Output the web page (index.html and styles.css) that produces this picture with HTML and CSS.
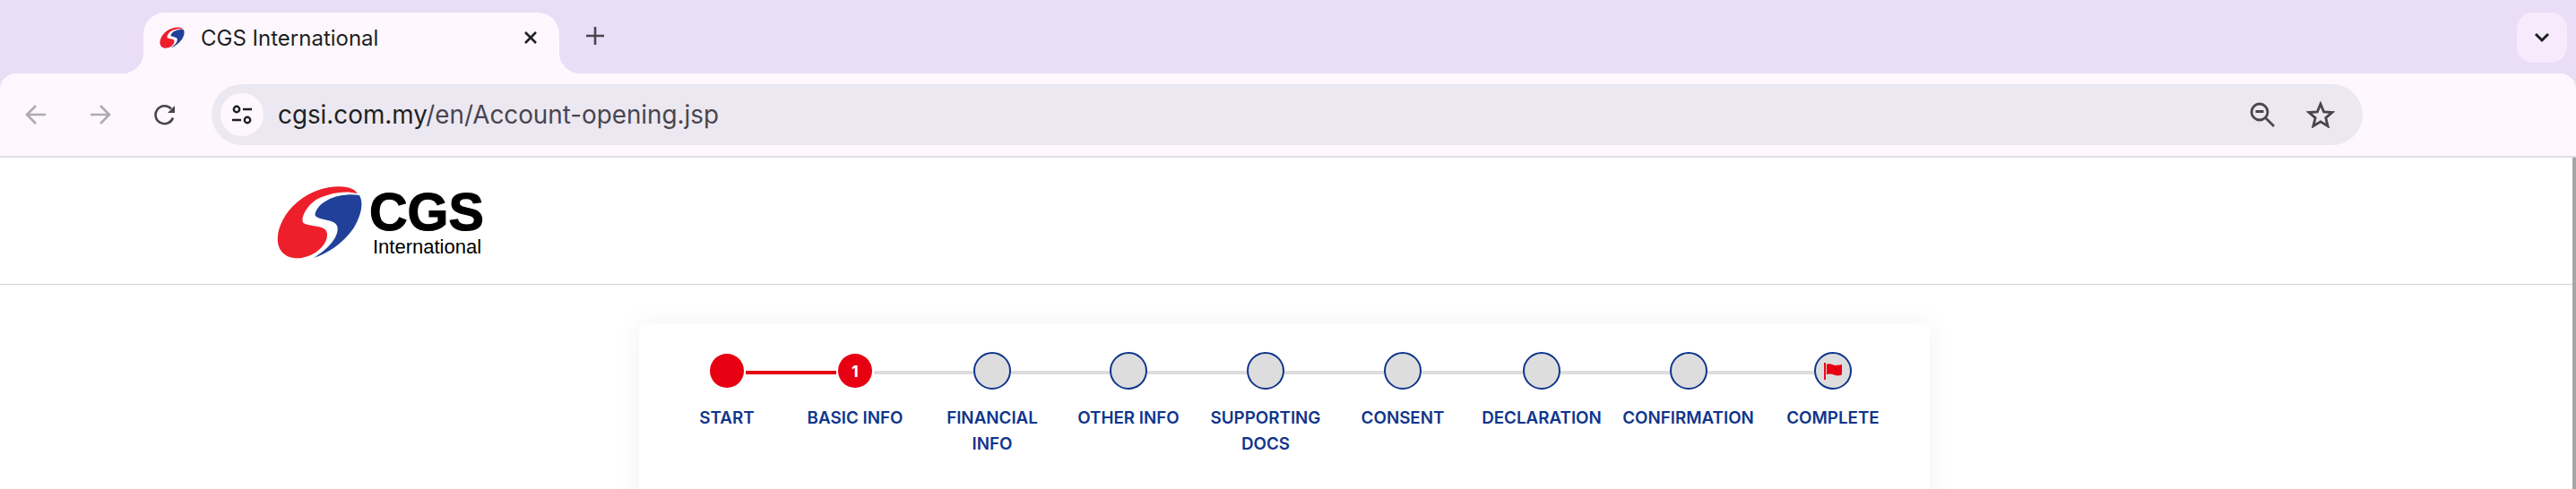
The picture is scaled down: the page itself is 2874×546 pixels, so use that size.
FILE: index.html
```html
<!DOCTYPE html>
<html lang="en">
<head>
    <meta charset="UTF-8">
    <meta name="viewport" content="width=device-width, initial-scale=1.0">
    <title>CGS International</title>
    <link rel="stylesheet" href="styles.css">
</head>
<body>

<svg class="defs" width="0" height="0">
    <symbol id="cgs-mark" viewBox="80 72 290 252">
        <path fill="#ee1f2b" d="M320 82C240 66 125 115 90 220C70 290 110 325 165 318C215 310 255 270 250 235C245 205 190 215 170 200C160 180 190 130 230 115C270 97 320 92 352 103C345 92 335 86 320 82Z"/>
        <path fill="#21409a" d="M358 108C372 130 368 170 338 220C303 270 250 305 205 318C250 290 290 250 285 215C280 185 220 195 210 175C212 145 250 118 290 110C315 105 340 104 358 108Z"/>
    </symbol>
</svg>

<div class="tab-strip">
    <div class="tab">
        <svg class="favicon"><use href="#cgs-mark"/></svg>
        <span class="tab-title">CGS International</span>
        <svg class="tab-close" viewBox="0 0 16 16"><path d="M2 2l12 12M14 2L2 14"/></svg>
    </div>
    <svg class="new-tab" viewBox="0 0 22 22"><path d="M11 1v20M1 11h20"/></svg>
    <div class="tab-menu">
        <svg viewBox="0 0 18 12"><path d="M2 2l7 7 7-7"/></svg>
    </div>
</div>

<div class="toolbar">
    <svg class="nav-icon disabled" viewBox="0 0 24 24"><path d="M23 12H2M12 2L2 12l10 10"/></svg>
    <svg class="nav-icon disabled" viewBox="0 0 24 24"><path d="M1 12h21M12 2l10 10-10 10"/></svg>
    <svg class="nav-icon reload" viewBox="0 0 24 24">
        <path d="M21 15.500A10 10 0 1 1 19 5.500"/>
        <path class="solid" d="M23 2v8h-8z"/>
    </svg>
    <div class="omnibox">
        <div class="site-chip">
            <svg viewBox="0 0 24 24">
                <circle cx="6" cy="6" r="3.2"/>
                <path d="M13 6h10M1 18h10"/>
                <circle cx="18" cy="18" r="3.2"/>
            </svg>
        </div>
        <div class="url"><span class="host">cgsi.com.my</span>/en/Account-opening.jsp</div>
        <svg class="omni-icon" viewBox="0 0 28 28">
            <circle cx="11" cy="11" r="9"/>
            <path d="M17.500 17.500L27 27M6.500 10.500h9"/>
        </svg>
        <svg class="omni-icon star" viewBox="0 0 32 30">
            <path d="M16 3l3.600 8.800 9.400.7-7.200 6.100 2.300 9.200L16 22.800l-8.100 5 2.300-9.200L3 12.500l9.400-.7z"/>
        </svg>
    </div>
</div>

<div class="page">
    <div class="content">
        <header class="site-header">
            <svg class="logo-mark"><use href="#cgs-mark"/></svg>
            <div class="logo-text">
                <div class="logo-name">CGS</div>
                <div class="logo-sub">International</div>
            </div>
        </header>

        <main class="card">
            <div class="stepper">
                <div class="step">
                    <div class="step-head"><span class="line none"></span><span class="dot done"></span><span class="line red"></span></div>
                    <div class="step-label">START</div>
                </div>
                <div class="step">
                    <div class="step-head"><span class="line red"></span><span class="dot done">1</span><span class="line"></span></div>
                    <div class="step-label">BASIC INFO</div>
                </div>
                <div class="step">
                    <div class="step-head"><span class="line"></span><span class="dot"></span><span class="line"></span></div>
                    <div class="step-label">FINANCIAL INFO</div>
                </div>
                <div class="step">
                    <div class="step-head"><span class="line"></span><span class="dot"></span><span class="line"></span></div>
                    <div class="step-label">OTHER INFO</div>
                </div>
                <div class="step">
                    <div class="step-head"><span class="line"></span><span class="dot"></span><span class="line"></span></div>
                    <div class="step-label">SUPPORTING DOCS</div>
                </div>
                <div class="step">
                    <div class="step-head"><span class="line"></span><span class="dot"></span><span class="line"></span></div>
                    <div class="step-label">CONSENT</div>
                </div>
                <div class="step">
                    <div class="step-head"><span class="line"></span><span class="dot"></span><span class="line"></span></div>
                    <div class="step-label">DECLARATION</div>
                </div>
                <div class="step">
                    <div class="step-head"><span class="line"></span><span class="dot"></span><span class="line"></span></div>
                    <div class="step-label">CONFIRMATION</div>
                </div>
                <div class="step">
                    <div class="step-head">
                        <span class="line"></span>
                        <span class="dot">
                            <svg class="flag" viewBox="0 0 22 20"><path d="M0 0h2v20H0z"/><path d="M3 2c5-2 8 2 12 1 2 0 4-1 6-1v12c-4 2-7 1-10 0-3-1-6-1-8 0z"/></svg>
                        </span>
                        <span class="line none"></span>
                    </div>
                    <div class="step-label">COMPLETE</div>
                </div>
            </div>
        </main>
    </div>
    <div class="scrollbar"></div>
</div>

</body>
</html>
```

FILE: styles.css
```css
* {
    box-sizing: border-box;
}
html, body {
    height: 100%;
}
body {
    margin: 0;
    display: flex;
    flex-direction: column;
    overflow: hidden;
    background-color: #eaddf6;
    font-family: Inter, "Liberation Sans", sans-serif;
}
.defs {
    display: block;
    height: 0;
}

/* browser chrome */
.tab-strip {
    display: flex;
    align-items: flex-start;
    height: 82px;
    padding: 14px 10px 0 160px;
}
.tab {
    position: relative;
    display: flex;
    align-items: center;
    width: 464px;
    height: 68px;
    padding: 0 24px 12px 18px;
    background-color: #fef8fe;
    border-radius: 24px 24px 0 0;
}
.tab::before,
.tab::after {
    content: "";
    position: absolute;
    bottom: 0;
    width: 24px;
    height: 24px;
}
.tab::before {
    left: -24px;
    background: radial-gradient(circle at 0 0, #eaddf6 24px, #fef8fe 24.5px);
}
.tab::after {
    right: -24px;
    background: radial-gradient(circle at 100% 0, #eaddf6 24px, #fef8fe 24.5px);
}
.favicon {
    width: 28px;
    height: 26px;
}
.tab-title {
    flex: 1;
    margin-left: 18px;
    font-size: 24px;
    color: #1f1f23;
}
.tab-close {
    width: 16px;
    height: 16px;
    fill: none;
    stroke: #1f1f23;
    stroke-width: 2.6;
}
.new-tab {
    width: 22px;
    height: 22px;
    margin: 15px 0 0 29px;
    fill: none;
    stroke: #49454f;
    stroke-width: 2.6;
}
.tab-menu {
    display: flex;
    align-items: center;
    justify-content: center;
    width: 56px;
    height: 56px;
    margin-left: auto;
    background-color: #f6eafc;
    border-radius: 18px;
}
.tab-menu svg {
    width: 18px;
    height: 12px;
    fill: none;
    stroke: #1f1f23;
    stroke-width: 3;
}
.toolbar {
    display: flex;
    align-items: center;
    height: 94px;
    padding: 0 238px 0 28px;
    background-color: #fef8fe;
    border-bottom: 2px solid #e3dde6;
    border-radius: 18px 18px 0 0;
}
.nav-icon {
    width: 24px;
    height: 24px;
    margin-right: 48px;
    fill: none;
    stroke-width: 2.6;
}
.nav-icon.disabled {
    stroke: #aeaab2;
}
.nav-icon.reload {
    margin-right: 40px;
    stroke: #49454f;
}
.reload .solid {
    fill: #49454f;
    stroke: none;
}
.omnibox {
    display: flex;
    align-items: center;
    flex: 1;
    height: 68px;
    padding: 0 31px 0 10px;
    background-color: #ece8f1;
    border-radius: 34px;
}
.site-chip {
    display: flex;
    align-items: center;
    justify-content: center;
    width: 48px;
    height: 48px;
    background-color: #fef8fe;
    border-radius: 50%;
}
.site-chip svg {
    width: 24px;
    height: 24px;
    fill: none;
    stroke: #1f1f23;
    stroke-width: 2.4;
}
.url {
    flex: 1;
    margin-left: 16px;
    font-size: 27.8px;
    color: #49454f;
}
.host {
    color: #1f1f23;
}
.omni-icon {
    width: 28px;
    height: 28px;
    fill: none;
    stroke: #49454f;
    stroke-width: 2.8;
}
.omni-icon.star {
    width: 32px;
    height: 30px;
    margin-left: 35px;
}

/* site */
.page {
    display: flex;
    flex: 1;
    min-height: 0;
    background-color: #fff;
}
.content {
    flex: 1;
    min-width: 0;
}
.scrollbar {
    width: 4px;
    background-color: #a6a6a6;
}
.site-header {
    display: flex;
    align-items: center;
    height: 142px;
    padding: 3px 0 0 308px;
    border-bottom: 1px solid #d4d4d4;
}
.logo-mark {
    width: 97px;
    height: 84px;
}
.logo-text {
    margin-left: 7px;
    padding-top: 6px;
    color: #000;
    font-family: "Liberation Sans", Arial, sans-serif;
}
.logo-name {
    font-size: 59px;
    font-weight: 700;
    line-height: 46px;
    -webkit-text-stroke: 1.2px #000;
}
.logo-sub {
    margin: 4px 0 0 4px;
    font-size: 22px;
    line-height: 24px;
}
.card {
    width: 1440px;
    height: 300px;
    margin: 43px 0 0 713px;
    padding: 32px 36px 0 37px;
    background-color: #fff;
    border-radius: 8px;
    box-shadow: 0 0 30px rgba(0, 0, 0, 0.06);
}
.stepper {
    display: grid;
    grid-template-columns: 122px 164px 142px 162px 144px 162px 148px 179px 144px;
}
.step-head {
    display: flex;
    align-items: center;
}
.line {
    flex: 1;
    height: 4px;
    margin-top: 4px;
    background-color: #dddddd;
}
.line.red {
    background-color: #e60012;
}
.line.none {
    background-color: transparent;
}
.dot {
    display: flex;
    align-items: center;
    justify-content: center;
    flex-shrink: 0;
    width: 42px;
    height: 42px;
    background-color: #dddddd;
    border: 2.5px solid #0f358c;
    border-radius: 50%;
}
.dot.done {
    width: 38px;
    height: 38px;
    margin: 2px;
    background-color: #e60012;
    border: 0;
    color: #fff;
    font-size: 18px;
    font-weight: 700;
}
.flag {
    width: 21px;
    height: 19px;
    fill: #e60012;
}
.step-label {
    margin-top: 17px;
    font-size: 18.800px;
    font-weight: 600;
    line-height: 29px;
    text-align: center;
    color: #0f358c;
}
```
